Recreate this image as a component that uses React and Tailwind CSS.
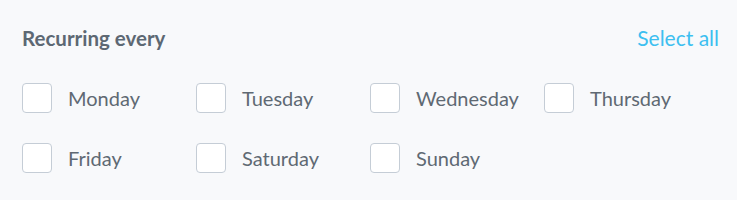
export default function App() {
  const days = ["Monday", "Tuesday", "Wednesday", "Thursday", "Friday", "Saturday", "Sunday"];

  return (
    <div className="h-[200px] w-full bg-[#f8f9fb] pl-[22px] pr-[18px] pt-[26px] font-['Lato',sans-serif]">
      {/* header */}
      <div className="flex h-[24px] items-center justify-between">
        <h2 className="text-[20.5px] font-bold text-[#5d6873]">Recurring every</h2>
        <button className="text-[21px] text-[#3dbff0]">Select all</button>
      </div>

      {/* days */}
      <div className="mt-[33px] grid grid-cols-[repeat(4,174px)] gap-y-[30px]">
        {days.map((d) => (
          <label key={d} className="flex items-center gap-[16px]">
            <span className="h-[30px] w-[30px] shrink-0 rounded-[4px] border border-[#c5cdd6] bg-white" />
            <span className="text-[20px] text-[#5f6973]">{d}</span>
          </label>
        ))}
      </div>
    </div>
  );
}
